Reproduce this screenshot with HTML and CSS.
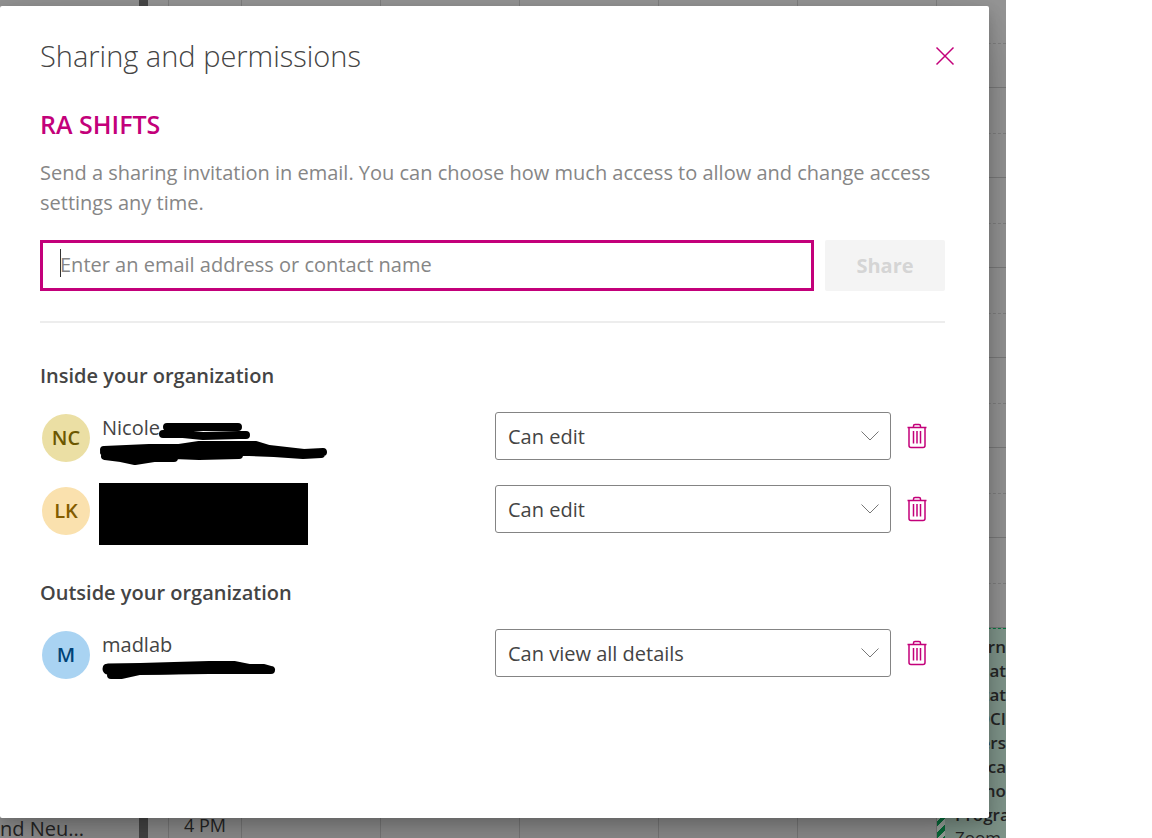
FILE: index.html
```html
<!DOCTYPE html>
<html lang="en">
<head>
  <meta charset="UTF-8" />
  <meta name="viewport" content="width=device-width, initial-scale=1.0"/>
  <title>Sharing and permissions</title>
  <link rel="stylesheet" href="styles.css">
</head>
<body>

<div class="app">

  <!-- calendar behind the dialog -->
  <div class="calendar">
    <div class="sidebar">nd Neu...</div>
    <div class="scrollbar"></div>
    <div class="times">4 PM</div>
    <div class="day"></div>
    <div class="day"></div>
    <div class="day"></div>
    <div class="day"></div>
    <div class="day"></div>
    <div class="day last">
      <div class="hour"></div>
      <div class="hour"></div>
      <div class="hour"></div>
      <div class="hour"></div>
      <div class="hour"></div>
      <div class="hour"></div>
      <div class="hour"></div>
      <div class="event">
        <div class="event-title">
          <div>ern</div>
          <div>at</div>
          <div>tat</div>
          <div>OCI</div>
          <div>ers</div>
          <div>ica</div>
          <div>tho</div>
          <div>Progra</div>
        </div>
        <div class="event-place">Zoom</div>
      </div>
    </div>
  </div>

  <div class="dialog" role="dialog" aria-labelledby="title">
    <div class="header">
      <h1 id="title">Sharing and permissions</h1>
      <button class="icon-button" aria-label="Close">
        <svg width="20" height="20" viewBox="0 0 20 20"><path d="M1.5 1.5l17 17M18.5 1.5l-17 17"/></svg>
      </button>
    </div>

    <h2>RA SHIFTS</h2>
    <p class="intro">Send a sharing invitation in email. You can choose how much access to allow and change access settings any time.</p>

    <form class="invite">
      <div class="invite-field">
        <input type="text" class="email" placeholder="Enter an email address or contact name" aria-label="Email address or contact name" />
        <span class="caret"></span>
      </div>
      <button type="button" class="share" disabled>Share</button>
    </form>

    <h3>Inside your organization</h3>
    <div class="people">
      <div class="person">
        <div class="avatar olive">NC</div>
        <div class="who">
          <label for="nicole">Nicole</label>
          <svg class="scribble" width="240" height="60" viewBox="0 0 240 60">
            <path class="thin" d="M68 15H139M64 22L84 22L104 24L140 23H147"/>
            <path class="thin" d="M5 38L50 36L80 36L100 33H157L170 37L205 41L224 40M5 40L40 41L110 38L150 40L175 41L204 43L222 42M6 44L22 46L36 49L55 46L75 46M75 43L100 44L140 43"/>
          </svg>
        </div>
        <div class="picker">
          <select id="nicole"><option>Can edit</option><option>Can view all details</option></select>
          <svg class="chevron" width="20" height="12" viewBox="0 0 20 12"><path d="M1.5 1.5L10 10l8.5-8.5"/></svg>
        </div>
        <button class="icon-button" aria-label="Remove">
          <svg width="20" height="26" viewBox="0 0 20 26"><path d="M.5 4.500h19M2 4.500V22.500q0 2 2 2H16q2 0 2-2V4.500M6.500 4V3q0-1.500 1.500-1.500h4q1.500 0 1.500 1.500v1M6.500 8v12.500M10 8v12.500M13.500 8v12.500"/></svg>
        </button>
      </div>

      <div class="person">
        <div class="avatar orange">LK</div>
        <div class="who"><span class="blackout"></span></div>
        <div class="picker">
          <select aria-label="Access for LK"><option>Can edit</option><option>Can view all details</option></select>
          <svg class="chevron" width="20" height="12" viewBox="0 0 20 12"><path d="M1.5 1.5L10 10l8.5-8.5"/></svg>
        </div>
        <button class="icon-button" aria-label="Remove">
          <svg width="20" height="26" viewBox="0 0 20 26"><path d="M.5 4.500h19M2 4.500V22.500q0 2 2 2H16q2 0 2-2V4.500M6.500 4V3q0-1.500 1.500-1.500h4q1.500 0 1.500 1.500v1M6.500 8v12.500M10 8v12.500M13.500 8v12.500"/></svg>
        </button>
      </div>
    </div>

    <h3 class="outside">Outside your organization</h3>
    <div class="people">
      <div class="person">
        <div class="avatar blue">M</div>
        <div class="who">
          <label for="madlab">madlab</label>
          <svg class="scribble" width="240" height="60" viewBox="0 0 240 60">
            <path d="M9 40L60 40L100 39H140" />
            <path class="thin" d="M8 39L75 37L110 36H135L150 39H165L172 41M12 46H22L40 42L110 41H172"/>
          </svg>
        </div>
        <div class="picker">
          <select id="madlab"><option>Can view all details</option><option>Can edit</option></select>
          <svg class="chevron" width="20" height="12" viewBox="0 0 20 12"><path d="M1.5 1.5L10 10l8.5-8.5"/></svg>
        </div>
        <button class="icon-button" aria-label="Remove">
          <svg width="20" height="26" viewBox="0 0 20 26"><path d="M.5 4.500h19M2 4.500V22.500q0 2 2 2H16q2 0 2-2V4.500M6.500 4V3q0-1.500 1.500-1.500h4q1.500 0 1.500 1.500v1M6.500 8v12.500M10 8v12.500M13.500 8v12.500"/></svg>
        </button>
      </div>
    </div>
  </div>

</div>

</body>
</html>
```
FILE: styles.css
```css
* {
  box-sizing: border-box;
}
body {
  margin: 0;
  background: #fff;
  color: #444;
  font-family: "Open Sans", "Noto Sans", sans-serif;
  font-size: 20px;
}
h1, h2, h3, p {
  margin: 0;
}
button, input, select {
  font: inherit;
}

.app {
  position: relative;
  display: flex;
  min-height: 100vh;
  margin-right: 146px;
  padding: 6px 17px 20px 0;
  overflow: hidden;
}

/* calendar */
.calendar {
  position: absolute;
  inset: 0;
  display: flex;
  background: #959595;
  color: #262626;
  font-size: 18px;
}
.sidebar {
  width: 139px;
  display: flex;
  align-items: flex-end;
  font-size: 20px;
  line-height: 18px;
  background: #929292;
}
.scrollbar {
  width: 9px;
  margin-right: 20px;
  background: #484848;
}
.times {
  width: 73px;
  display: flex;
  align-items: flex-end;
  padding-left: 15px;
  line-height: 26px;
  border-left: 1px solid #7f7f7f;
}
.day {
  width: 139px;
  border-left: 1px solid #7f7f7f;
}
.day.last {
  display: flex;
  flex-direction: column;
  flex: 1;
  min-width: 0;
}
.hour {
  flex: none;
  height: 90px;
  border-bottom: 1px solid #7b7b7b;
}
.hour::before {
  content: "";
  display: block;
  height: 45px;
  border-bottom: 1px dashed #808080;
}
.hour:first-child {
  margin-top: -2px;
}
.event {
  flex: 1;
  min-height: 0;
  padding: 6px 0 0 18px;
  overflow: hidden;
  line-height: 24px;
  font-size: 17px;
  border-top: 1px dashed #087a42;
  background:
    repeating-linear-gradient(135deg, #08703c 0 4px, #a0aaa3 4px 8px) 0 0 / 8px 100% no-repeat,
    #82988d;
}
.event-title {
  font-weight: 600;
  text-align: right;
}
.event-place {
  line-height: 22px;
}

/* dialog */
.dialog {
  position: relative;
  flex: 1;
  padding: 28px 44px 0 40px;
  background: #fff;
  border-radius: 2px;
  box-shadow: 0 26px 58px rgba(0,0,0,0.22), 0 5px 14px rgba(0,0,0,0.18);
}
.header {
  display: flex;
  justify-content: space-between;
  align-items: center;
  margin-right: -10px;
}
h1 {
  font-size: 29px;
  line-height: 44px;
  font-weight: 300;
}
h2 {
  margin-top: 28px;
  font-size: 25px;
  line-height: 36px;
  font-weight: 600;
  color: #c3007a;
}
.intro {
  margin-top: 16px;
  line-height: 30px;
  color: #868686;
}
.icon-button {
  display: flex;
  padding: 0;
  border: 0;
  background: none;
}
.icon-button svg {
  fill: none;
  stroke: #c3007a;
  stroke-width: 1.5;
}
.invite {
  display: flex;
  gap: 11px;
  height: 83px;
  margin-top: 22px;
  padding-bottom: 30px;
  border-bottom: 2px solid #ededed;
}
.invite-field {
  position: relative;
  flex: 1;
}
.email {
  width: 100%;
  height: 51px;
  padding: 0 17px 2px;
  border: 3px solid #c3007a;
  color: #444;
}
.email::placeholder {
  color: #868686;
}
.caret {
  position: absolute;
  left: 20px;
  top: 9px;
  width: 1px;
  height: 28px;
  background: #333;
}
.share {
  width: 120px;
  height: 51px;
  border: 0;
  border-radius: 2px;
  background: #f4f4f4;
  color: #d5d5d5;
  font-weight: 700;
}
h3 {
  margin-top: 38px;
  font-size: 20px;
  line-height: 30px;
  font-weight: 600;
}
.outside {
  margin-top: 45px;
}

.people {
  display: flex;
  flex-direction: column;
  gap: 25px;
  margin-top: 21px;
}
.person {
  display: flex;
  align-items: center;
  height: 48px;
  padding: 0 18px 0 2px;
}
.avatar {
  width: 48px;
  height: 48px;
  margin-top: 3px;
  border-radius: 50%;
  line-height: 48px;
  text-align: center;
  font-weight: 600;
}
.olive {
  background: #ebdfa4;
  color: #6c5700;
}
.orange {
  background: #fae1ae;
  color: #835c00;
}
.blue {
  background: #a9d3f2;
  color: #004377;
}
.who {
  position: relative;
  flex: 1;
  height: 48px;
  padding: 2px 0 0 12px;
  line-height: 28px;
}
.scribble {
  position: absolute;
  left: 9px;
  top: 0;
  fill: none;
  stroke: #000;
  stroke-width: 11;
  stroke-linecap: round;
  stroke-linejoin: round;
}
.scribble .thin {
  stroke-width: 8;
}
.blackout {
  position: absolute;
  left: 9px;
  top: -2px;
  width: 209px;
  height: 62px;
  background: #000;
}
.picker {
  position: relative;
  width: 396px;
  margin-right: 16px;
}
select {
  appearance: none;
  display: block;
  width: 100%;
  height: 48px;
  padding: 0 40px 0 12px;
  border: 1px solid #848484;
  border-radius: 3px;
  background: #fff;
  color: #444;
}
.chevron {
  position: absolute;
  right: 11px;
  top: 18px;
  fill: none;
  stroke: #777;
  pointer-events: none;
}
```
